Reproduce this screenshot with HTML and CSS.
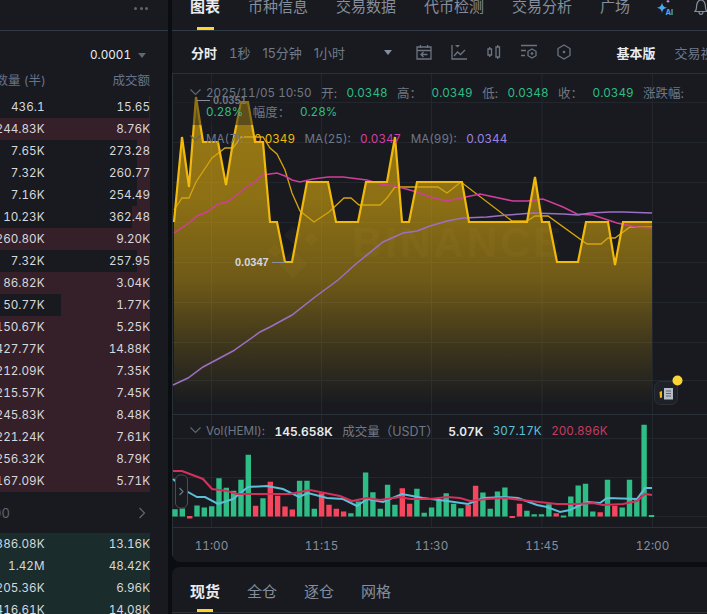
FILE: index.html
```html
<!DOCTYPE html>
<html lang="zh">
<head>
<meta charset="utf-8">
<title>HEMI 图表</title>
<link rel="stylesheet" href="styles.css">
</head>
<body>
<div class="page">
  <aside class="book">
    <div class="book-top"><span class="dots"><i></i><i></i><i></i></span></div>
    <div class="book-tick"><span>0.0001</span><b class="tri"></b></div>
    <div class="book-head"><span>数量 (半)</span><span>成交额</span></div>
    <div class="asks">
      <div class="row"><u class="depth red" style="width:1px"></u><span>436.1</span><span>15.65</span></div>
      <div class="row"><u class="depth red" style="width:100%"></u><span>244.83K</span><span>8.76K</span></div>
      <div class="row"><u class="depth red" style="width:13px"></u><span>7.65K</span><span>273.28</span></div>
      <div class="row"><u class="depth red" style="width:13px"></u><span>7.32K</span><span>260.77</span></div>
      <div class="row"><u class="depth red" style="width:13px"></u><span>7.16K</span><span>254.49</span></div>
      <div class="row"><u class="depth red" style="width:18px"></u><span>10.23K</span><span>362.48</span></div>
      <div class="row"><u class="depth red" style="width:100%"></u><span>260.80K</span><span>9.20K</span></div>
      <div class="row"><u class="depth red" style="width:13px"></u><span>7.32K</span><span>257.95</span></div>
      <div class="row"><u class="depth red" style="width:100%"></u><span>86.82K</span><span>3.04K</span></div>
      <div class="row"><u class="depth red" style="width:89px"></u><span>50.77K</span><span>1.77K</span></div>
      <div class="row"><u class="depth red" style="width:100%"></u><span>150.67K</span><span>5.25K</span></div>
      <div class="row"><u class="depth red" style="width:100%"></u><span>427.77K</span><span>14.88K</span></div>
      <div class="row"><u class="depth red" style="width:100%"></u><span>212.09K</span><span>7.35K</span></div>
      <div class="row"><u class="depth red" style="width:100%"></u><span>215.57K</span><span>7.45K</span></div>
      <div class="row"><u class="depth red" style="width:100%"></u><span>245.83K</span><span>8.48K</span></div>
      <div class="row"><u class="depth red" style="width:100%"></u><span>221.24K</span><span>7.61K</span></div>
      <div class="row"><u class="depth red" style="width:100%"></u><span>256.32K</span><span>8.79K</span></div>
      <div class="row"><u class="depth red" style="width:100%"></u><span>167.09K</span><span>5.71K</span></div>
    </div>
    <div class="mid"><span class="mid-price">00</span>
      <svg class="mid-arrow" width="8" height="12" viewBox="0 0 8 12"><path d="M1.500 1l5 5-5 5"/></svg>
    </div>
    <div class="bids">
      <div class="row"><u class="depth green" style="width:100%"></u><span>386.08K</span><span>13.16K</span></div>
      <div class="row"><u class="depth green" style="width:100%"></u><span>1.42M</span><span>48.42K</span></div>
      <div class="row"><u class="depth green" style="width:100%"></u><span>205.36K</span><span>6.96K</span></div>
      <div class="row"><u class="depth green" style="width:100%"></u><span>416.61K</span><span>14.08K</span></div>
    </div>
  </aside>

  <main class="main">
    <section class="chart-panel">
      <nav class="tabs">
        <a class="tab active">图表</a>
        <a class="tab">币种信息</a>
        <a class="tab">交易数据</a>
        <a class="tab">代币检测</a>
        <a class="tab">交易分析</a>
        <a class="tab">广场</a>
        <svg class="ai-icon" width="20" height="18" viewBox="0 0 20 18">
          <path d="M7 3.500c.7 3.500 1.800 4.600 5.300 5.300C8.800 9.500 7.700 10.600 7 14.100 6.300 10.600 5.200 9.500 1.700 8.800 5.200 8.100 6.300 7 7 3.500z" fill="#4aa8f5"/>
          <path d="M13 0c.3 1.400.8 1.900 2.200 2.200-1.400.3-1.900.8-2.200 2.200-.3-1.400-.8-1.900-2.200-2.200C12.200 1.900 12.700 1.400 13 0z" fill="#c58ce8"/>
          <text class="ai-text" x="10.500" y="16">AI</text>
        </svg>
        <svg class="bell" width="14" height="17" viewBox="0 0 14 17"><path d="M1 12.500c1.400-1.300 1.600-2.500 1.600-5C2.600 4 4.400 1 7 1s4.400 3 4.400 6.500c0 2.500.2 3.700 1.600 5zM5 12.500c0 1.800.8 2.800 2 2.800s2-1 2-2.800"/></svg>
      </nav>

      <div class="toolbar">
        <span class="iv active">分时</span>
        <span class="iv iv-wide">1秒</span>
        <span class="iv">15分钟</span>
        <span class="iv">1小时</span>
        <b class="tri tri-tool"></b>
        <div class="tools">
          <svg width="16" height="16" viewBox="0 0 16 16"><path d="M1 3h14v12H1zM1 6.500h14M4.500 1v3M11.500 1v3M11.500 10.500H5M7.500 8L5 10.500 7.500 13"/></svg>
          <svg width="16" height="16" viewBox="0 0 16 16"><path d="M1 1v14h15M3 12l3.500-4 3 2.500L14 6"/><path class="fill" d="M4 1h5L6.500 3.500z"/></svg>
          <svg width="16" height="16" viewBox="0 0 16 16"><path d="M2 5h3.500v6H2zM3.700 3v2M3.700 11v2M10 3h3.500v10H10zM11.700 1v2M11.700 13v2"/></svg>
          <svg width="16" height="16" viewBox="0 0 16 16"><path d="M0 1.500h16M0 6.500h5M0 11.500h4M11 5l4 2.300v4.400L11 14l-4-2.300V7.300z"/><circle class="fill" cx="11" cy="9.500" r="1.300"/></svg>
          <svg width="16" height="16" viewBox="0 0 16 16"><path d="M8 1l6 3.500v7L8 15l-6-3.500v-7z"/><circle class="fill" cx="8" cy="8" r="1.300"/></svg>
        </div>
        <span class="iv-mode active">基本版</span>
        <span class="iv-mode">交易视图</span>
      </div>

      <div class="chart">
        <svg class="plot" width="535" height="488" viewBox="172 74 535 488">
          <defs>
            <linearGradient id="area" gradientUnits="userSpaceOnUse" x1="0" y1="97" x2="0" y2="405">
              <stop offset="0" stop-color="#f0b90b" stop-opacity=".6"/>
              <stop offset=".334" stop-color="#f0b90b" stop-opacity=".54"/>
              <stop offset=".594" stop-color="#f0b90b" stop-opacity=".4"/>
              <stop offset=".821" stop-color="#f0b90b" stop-opacity=".16"/>
              <stop offset="1" stop-color="#f0b90b" stop-opacity="0"/>
            </linearGradient>
          </defs>
          <path class="grid" d="M211.500 74V527M321.500 74V527M431.500 74V527M542 74V527M652.500 74V527M172 102.500H707M172 142.500H707M172 182.500H707M172 222.500H707M172 262.500H707M172 302.500H707M172 342.500H707M172 380.500H707M172 438.500H707M172 477.500H707M172 516.500H707"/>
          <path class="axis-line" d="M172 414.500H707M172 527.500H707M172.500 74V556"/>
          <g class="mark">
            <path d="M293 226l9 9-9 9-9-9zM293 250l14 14-14 14-14-14zM275 244l7 7-7 7-7-7zM311 232l7 7-7 7-7-7z"/>
            <text class="mark-text" x="352" y="257">BINANCE</text>
          </g>
          <path fill="url(#area)" d="M174 405V222L182 137 189 187 196 97 203 142 218 142 226 185 233 142 241 102 248 102 255 142 263 142 270 222 277 222 285 262 292 262 307 182 328 182 336 222 358 222 366 182 387 182 395 137 402 222 409 222 417 182 462 182 469 222 527 222 535 177 542 222 549 222 557 262 578 262 586 222 608 222 615 265 623 222 652 222V405z"/>
          <path class="ma7" d="M174 210L182 198 189 198 196 182 212 158 225 148 233 148 241 137 253 137 263 137 270 148 277 154 285 170 292 193 300 211 314 222 329 212 344 198 351 198 359 205 380 205 387 198 395 187 417 187 438 187 447 193 461 182 512 221 527 221 535 216 548 216 587 244 601 244 608 238 615 238 630 227 652 227"/>
          <path class="ma25" d="M174 233L183 227 189 223 197 216 207 212 218 204 227 202 233 198 248 186 255 182 263 175 277 173 285 176 292 180 300 182 313 179 328 177 343 177 367 180 380 184 395 186 417 192 430 197 447 201 480 194 513 201 527 201 543 199 563 207 577 214 593 215 617 223 637 227 652 228"/>
          <path class="ma99" d="M173 385L188 378 203 367 218 359 233 351 260 332 270 327 292 315 315 297 338 280 357 263 383 242 403 233 417 231 430 226 447 221 463 218 487 217 507 215 533 213 563 214 578 215 590 213 610 212 623 212 652 213"/>
          <path class="price" d="M174 222L182 137 189 187 196 97 203 142 218 142 226 185 233 142 241 102 248 102 255 142 263 142 270 222 277 222 285 262 292 262 307 182 328 182 336 222 358 222 366 182 387 182 395 137 402 222 409 222 417 182 462 182 469 222 527 222 535 177 542 222 549 222 557 262 578 262 586 222 608 222 615 265 623 222 652 222"/>
          <rect class="legend-veil" x="173" y="84" width="130" height="41"/>
          <path class="tick" d="M197 100.500H210"/>
          <text class="extreme dim" x="213" y="104">0.0351</text>
          <path class="tick" d="M272 262.500H285"/>
          <text class="extreme" x="235" y="266">0.0347</text>

          <path class="bar-up" d="M175 516.500v-7.300M182.300 516.500v-8M197 516.500v-11M204.300 516.500v-9M211.700 516.500v-10.300M219 516.500v-38.300M226.300 516.500v-28.700M233.600 516.500v-25.700M241 516.500v-36.700M248.300 516.500v-61.700M263 516.500v-18.300M299.600 516.500v-35.700M307 516.500v-35.700M314.300 516.500v-7.700M350.900 516.500v-3.300M358.300 516.500v-15M365.600 516.500v-44M372.900 516.500v-24.300M380.300 516.500v-7.700M387.600 516.500v-31.700M394.900 516.500v-11.700M416.900 516.500v-27.700M424.200 516.500v-3.700M431.600 516.500v-9M438.900 516.500v-16.700M446.200 516.500v-23.300M453.600 516.500v-12.700M460.900 516.500v-8.300M482.900 516.500v-24M490.200 516.500v-7.700M497.500 516.500v-25M504.900 516.500v-29M526.900 516.500v-5.700M534.200 516.500v-2.300M541.500 516.500v-2.300M548.900 516.500v-12.300M563.500 517.500v-2M570.800 516.500v-20M578.200 516.500v-31M585.500 516.500v-32.700M592.800 516.500v-5M607.500 516.500v-36.700M622.200 516.500v-9M629.500 516.500v-36.700M636.800 516.500v-16.700M644.100 516.500v-91.700M651.500 517v-2"/>
          <path class="bar-down" d="M189.700 518.500v-2.500M255.600 516.500v-10.700M270.300 516.500v-34.700M277.600 516.500v-20.700M285 516.500v-10M292.300 516.500v-7M321.600 516.500v-23.300M329 516.500v-11.700M336.300 516.500v-7.700M343.600 516.500v-5M402.300 516.500v-28.300M409.600 516.500v-12.700M468.200 516.500v-11.700M475.600 516.500v-30.700M512.200 518v-2M519.500 516.500v-12.700M556.200 516.500v-3.300M600.200 516.500v-4.300M614.800 516.500v-10.700"/>
          <path class="vol-blue" d="M173 479L188 492 197 497 205 497 218 504 233 499 248 487 267 486 283 489 299 497 308 493 327 498 343 499 357 506 367 499 383 502 402 494 423 498 447 501 468 504 483 498 505 497 518 498 537 505 547 507 560 512 570 510 587 502 600 503 607 498 637 499 645 488 652 488"/>
          <path class="vol-red" d="M173 471L182 471 203 479 212 489 227 491 237 494 290 494 310 490 340 496 352 501 367 498 380 500 400 497 410 499 430 499 447 497 460 498 470 501 487 499 505 498 530 501 557 504 577 504 593 503 603 505 623 504 637 501 645 494 652 495"/>
          <rect class="handle" x="175.500" y="475" width="12" height="33" rx="5"/>
          <path class="handle-arrow" d="M179.500 488l3.500 3.500-3.500 3.500"/>

          <text class="time" x="211.500" y="550">11:00</text>
          <text class="time" x="321.500" y="550">11:15</text>
          <text class="time" x="431.500" y="550">11:30</text>
          <text class="time" x="542" y="550">11:45</text>
          <text class="time" x="652.500" y="550">12:00</text>

          <rect class="note-box" x="654.500" y="381.500" width="23" height="23" rx="6"/>
          <path class="note-page" d="M664 388h9v11.500h-9z"/>
          <path class="note-lines" d="M666 391h5M666 393.500h5M666 396h5"/>
          <path class="note-coin" d="M659.500 392l2.500-1v6.500l-2 .5z"/>
          <circle class="note-dot" cx="677.500" cy="380.500" r="5"/>
        </svg>

        <div class="legend legend-a">
          <svg class="chev" width="11" height="7" viewBox="0 0 11 7"><path d="M.5.500l5 5 5-5"/></svg>
          <div class="legend-items wrap">
            <span class="k">2025/11/05 10:50</span>
            <span class="k cjk">开:</span><span class="up">0.0348</span>
            <span class="k cjk">高：</span><span class="up">0.0349</span>
            <span class="k cjk">低:</span><span class="up">0.0348</span>
            <span class="k cjk">收：</span><span class="up">0.0349</span>
            <span class="k cjk">涨跌幅:</span><span class="up">0.28%</span>
            <span class="k cjk">幅度：</span><span class="up">0.28%</span>
          </div>
        </div>
        <div class="legend legend-b">
          <svg class="chev" width="11" height="7" viewBox="0 0 11 7"><path d="M.5.500l5 5 5-5"/></svg>
          <div class="legend-items">
            <span class="k">MA(7):</span><span class="c-ma7">0.0349</span>
            <span class="k">MA(25):</span><span class="c-ma25">0.0347</span>
            <span class="k">MA(99):</span><span class="c-ma99">0.0344</span>
          </div>
        </div>
        <div class="legend legend-c">
          <svg class="chev" width="11" height="7" viewBox="0 0 11 7"><path d="M.5.500l5 5 5-5"/></svg>
          <div class="legend-items">
            <span class="k">Vol(HEMI):</span><span class="w">145.658K</span>
            <span class="k cjk">成交量（USDT）</span><span class="w">5.07K</span>
            <span class="c-blue">307.17K</span><span class="c-pink">200.896K</span>
          </div>
        </div>
      </div>
    </section>

    <section class="trade">
      <a class="tab active">现货</a>
      <a class="tab">全仓</a>
      <a class="tab">逐仓</a>
      <a class="tab">网格</a>
      <span class="percent">%</span>
    </section>
  </main>
</div>
</body>
</html>
```

FILE: styles.css
```css
* { box-sizing: border-box; }
html, body { margin: 0; height: 100%; background: #0b0e11; overflow: hidden; }
body { font-family: Inter, "Noto Sans CJK SC", sans-serif; font-size: 12px; color: #d5d8dd; font-variant-numeric: tabular-nums; }
.page { display: flex; width: 707px; height: 614px; overflow: hidden; }

/* order book */
.book { flex: 0 0 168px; height: 614px; background: #181a20; overflow: hidden; }
.book-top { height: 31px; border-bottom: 1px solid #333b47; display: flex; justify-content: flex-end; align-items: flex-start; padding: 7px 20px 0 0; }
.dots { display: flex; gap: 2.500px; }
.dots i { width: 3px; height: 3px; border-radius: 50%; background: #5e6673; }
.book-tick { height: 37px; display: flex; justify-content: flex-end; align-items: center; gap: 7px; padding-right: 22px; padding-top: 11px; color: #eaecef; font-size: 11.700px; }
.tri { display: block; width: 0; height: 0; border: 4px solid transparent; border-top: 5px solid #848e9c; border-bottom: 0; }
.book-tick .tri { border-top-color: #5e6673; }
.book-head { width: 180px; margin-left: -30px; height: 28px; padding-bottom: 6px; display: grid; grid-template-columns: 76px 104px; text-align: right; align-items: center; color: #66738c; font-size: 12.500px; }
.asks, .bids { width: 180px; margin-left: -30px; }
.row { position: relative; height: 22px; padding-top: 1px; display: grid; grid-template-columns: 74.500px 105.500px; align-items: center; text-align: right; font-size: 11.700px; line-height: 21px; white-space: nowrap; }
.row span { position: relative; }
.depth { position: absolute; top: 0; bottom: 0; right: 0; text-decoration: none; }
.depth.red { background: #35202a; }
.depth.green { background: #1b2c2d; }
.mid { height: 41px; display: flex; justify-content: space-between; align-items: center; width: 146px; }
.mid-price { color: #5e6673; font-size: 13px; margin-left: -7px; }
.mid-arrow { fill: none; stroke: #5e6673; stroke-width: 1.200; }

/* main column */
.main { flex: 0 0 535px; margin-left: 4px; display: flex; flex-direction: column; gap: 5px; }
.chart-panel { height: 562px; background: #181a20; border-bottom-left-radius: 8px; overflow: hidden; }
.tabs { height: 31px; border-bottom: 1px solid #333b47; display: flex; align-items: flex-start; gap: 28px; padding-left: 18px; }
.tab { position: relative; display: block; font-size: 15px; line-height: 15px; color: #848e9c; white-space: nowrap; }
.tabs .tab { margin-top: -1px; }
.tabs .tab.active::after { content: ""; position: absolute; left: 7px; right: 6px; top: 28px; height: 3px; background: #fcd535; }
.tab.active { color: #eaecef; font-weight: 700; }
.ai-icon { margin-left: -3px; margin-top: -1px; flex: none; }
.ai-text { font: 700 7.500px Inter, sans-serif; fill: #4aa8f5; }
.bell { flex: none; margin-left: -9px; margin-top: -1px; fill: none; stroke: #848e9c; stroke-width: 1.200; }

.toolbar { height: 43px; border-bottom: 1px solid #2b3139; display: flex; align-items: center; padding-left: 19px; white-space: nowrap; color: #707a8a; font-size: 13px; font-variant-numeric: normal; }
.iv { margin-right: 12px; }
.iv-wide { font-variant-numeric: tabular-nums; }
.iv.active, .iv-mode.active { color: #eaecef; font-weight: 700; }
.tri-tool { margin-left: 27px; border-top-color: #848e9c; }
.tools { display: flex; gap: 18.900px; margin-left: 24px; }
.tools svg { display: block; fill: none; stroke: #6b7480; stroke-width: 1.300; }
.tools .fill { fill: #6b7480; stroke: none; }
.iv-mode.active { margin-left: 45px; margin-right: 19px; }

.chart { position: relative; height: 488px; }
.plot { display: block; }
.grid { fill: none; stroke: #22262d; stroke-width: 1; }
.axis-line { fill: none; stroke: #2b3139; stroke-width: 1; }
.mark { fill: #f0d98a; opacity: .035; }
.mark-text { font: 700 42px "Liberation Sans", sans-serif; letter-spacing: 3px; }
.price { fill: none; stroke: #f0b90b; stroke-width: 2.200; stroke-linejoin: miter; }
.ma7 { fill: none; stroke: #d6a40e; stroke-width: 1.300; }
.ma25 { fill: none; stroke: #cf3f99; stroke-width: 1.500; }
.ma99 { fill: none; stroke: #9b70c4; stroke-width: 1.500; }
.legend-veil { fill: #181a20; opacity: .45; }
.tick { fill: none; stroke: #8c9099; stroke-width: 1; }
.extreme { font: 700 11px "Liberation Sans", sans-serif; fill: #d5d8dd; }
.extreme.dim { fill: #70757e; }
.bar-up, .bar-down { fill: none; stroke-width: 5.400; }
.bar-up { stroke: #2ebd85; }
.bar-down { stroke: #f6465d; }
.vol-blue { fill: none; stroke: #5bc0d8; stroke-width: 2; }
.vol-red { fill: none; stroke: #d4305c; stroke-width: 2.200; }
.handle { fill: #181a20; stroke: #474d57; stroke-width: 1; }
.handle-arrow { fill: none; stroke: #707a8a; stroke-width: 1.100; }
.time { font: 400 11.700px Inter, sans-serif; font-variant-numeric: tabular-nums; fill: #848e9c; text-anchor: middle; }
.note-box { fill: #1e2127; stroke: #2b3139; }
.note-page { fill: #b7bdc6; }
.note-lines { fill: none; stroke: #5e6673; stroke-width: 1; }
.note-coin { fill: #f0b90b; }
.note-dot { fill: #fcd535; }

.legend { position: absolute; left: 18px; display: flex; align-items: flex-start; gap: 5px; font-size: 11.700px; line-height: 19px; white-space: nowrap; }
.legend-a { top: 10px; }
.legend-b { top: 56px; }
.legend-c { top: 348px; }
.chev { flex: none; margin-top: 5px; fill: none; stroke: #5e6673; stroke-width: 1.200; }
.legend-items { display: flex; gap: 0 9.500px; }
.legend-items.wrap { flex-wrap: wrap; width: 490px; }
.k { color: #6f7885; }
.k.cjk { font-size: 12.500px; }
.up { color: #2ebd85; }
.w { color: #eaecef; font-weight: 600; font-size: 12px; }
.c-ma7 { color: #f0b90b; }
.c-ma25 { color: #d63fa0; }
.c-ma99 { color: #a083e0; }
.c-blue { color: #5bc0d8; }
.c-pink { color: #c93a62; }

/* bottom panel */
.trade { position: relative; flex: 1; background: #181a20; display: flex; gap: 27px; padding: 17px 0 0 18px; border-radius: 8px 0 0 0; }
.trade::after { content: ""; position: absolute; left: 0; right: 0; top: 45px; height: 1px; background: #2b3139; }
.trade .tab.active::after { content: ""; position: absolute; left: 7px; right: 7px; top: 25px; height: 3px; background: #fcd535; z-index: 1; }
.percent { position: absolute; right: -2px; top: 13px; font-size: 15px; color: #848e9c; }
```
